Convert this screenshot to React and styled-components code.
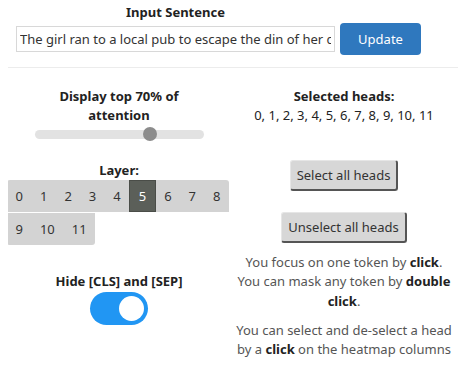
import React, { useState } from 'react'
import styled, { createGlobalStyle } from 'styled-components';

const GlobalStyle = createGlobalStyle`
  body {
    margin: 0 8px;
    padding-top: 3px;
    background: #fff;
    font-family: "Noto Sans", "DejaVu Sans", sans-serif;
    font-size: 13px;
    color: #222;
  }
`;

const layers = [0, 1, 2, 3, 4, 5, 6, 7, 8, 9, 10, 11]

const App = () => {
  const [sentence, setSentence] = useState('The girl ran to a local pub to escape the din of her city')
  const [layer, setLayer] = useState(5)
  const [hide, setHide] = useState(true)

  return (
    <Page>
      <GlobalStyle />
      <InputRow>
        <InputCol>
          <Title>Input Sentence</Title>
          <TextInput value={sentence} onChange={(e) => setSentence(e.target.value)} />
        </InputCol>
        <UpdateButton>Update</UpdateButton>
      </InputRow>
      <Rule />
      <Columns>
        <LeftCol>
          <Title>Display top 70% of<br />attention</Title>
          <Track>
            <Thumb />
          </Track>
          <LayerTitle>Layer:</LayerTitle>
          <LayerGroup>
            {layers.map((l) => (
              <LayerButton key={l} $active={l === layer} onClick={() => setLayer(l)}>{l}</LayerButton>
            ))}
          </LayerGroup>
          <HideTitle>Hide [CLS] and [SEP]</HideTitle>
          <Toggle $on={hide} onClick={() => setHide(!hide)}>
            <Knob $on={hide} />
          </Toggle>
        </LeftCol>
        <RightCol>
          <Title>Selected heads:</Title>
          <Heads>0, 1, 2, 3, 4, 5, 6, 7, 8, 9, 10, 11</Heads>
          <GrayButton $top="34px">Select all heads</GrayButton>
          <GrayButton $top="21px">Unselect all heads</GrayButton>
          <Help>
            You focus on one token by <b>click</b>.<br />
            You can mask any token by <b>double click</b>.
          </Help>
          <Help $top="9.5px">
            You can select and de-select a head by a <b>click</b> on the heatmap columns
          </Help>
        </RightCol>
      </Columns>
    </Page>
  )
}

export default App

const Page = styled.div`
  width: 450px;
`;
const InputRow = styled.div`
  display: flex;
  align-items: flex-end;
  gap: 5px;
  padding-left: 8px;
`;
const InputCol = styled.div`
  display: flex;
  flex-direction: column;
  align-items: center;
  width: 319px;
`;
const Title = styled.div`
  font-weight: 700;
  text-align: center;
  line-height: 19.5px;
  color: #222;
`;
const TextInput = styled.input`
  box-sizing: border-box;
  width: 319px;
  height: 26px;
  margin-top: 3px;
  margin-bottom: 3px;
  padding: 0 3px;
  border: 1px solid #d8d8d8;
  font-family: inherit;
  font-size: 13px;
  color: #333;
  outline: none;
`;
const UpdateButton = styled.button`
  width: 81px;
  height: 32px;
  border: none;
  border-radius: 4px;
  background: #2f78be;
  color: #fff;
  font-family: inherit;
  font-size: 13px;
`;
const Rule = styled.div`
  height: 1px;
  background: #ececec;
  margin: 12px 0 0 0;
`;
const Columns = styled.div`
  display: flex;
  padding-top: 19px;
`;
const LeftCol = styled.div`
  width: 222px;
  display: flex;
  flex-direction: column;
  align-items: center;
`;
const RightCol = styled.div`
  width: 228px;
  display: flex;
  flex-direction: column;
  align-items: center;
`;
const Track = styled.div`
  position: relative;
  width: 169px;
  height: 9px;
  border-radius: 5px;
  background: #e2e2e2;
  margin-top: 4px;
`;
const Thumb = styled.div`
  position: absolute;
  left: 108px;
  top: -3px;
  width: 14px;
  height: 14px;
  border-radius: 50%;
  background: #8c8c8c;
`;
const LayerTitle = styled(Title)`
  margin-top: 22px;
`;
const LayerGroup = styled.div`
  display: flex;
  flex-wrap: wrap;
  width: 223px;
  margin-left: -1px;
`;
const LayerButton = styled.div`
  height: 32px;
  padding: 0 8.5px;
  display: flex;
  align-items: center;
  justify-content: center;
  background: ${(props) => props.$active ? "#5b5f59" : "#d3d3d3"};
  color: ${(props) => props.$active ? "#fff" : "#333"};
  border: ${(props) => props.$active ? "1px solid #4a4d48" : "none"};
  box-sizing: border-box;
  cursor: pointer;
  &:first-child { border-top-left-radius: 3px; }
  &:nth-child(9) { border-top-right-radius: 3px; }
  &:nth-child(10) { border-bottom-left-radius: 3px; margin-top: 1px; }
  &:nth-child(11), &:nth-child(12) { margin-top: 1px; }
  &:last-child { border-bottom-right-radius: 3px; }
`;
const HideTitle = styled(Title)`
  margin-top: 27px;
`;
const Toggle = styled.div`
  position: relative;
  width: 58px;
  height: 33px;
  border-radius: 17px;
  margin-top: 0px;
  background: ${(props) => props.$on ? "#2196f3" : "#ccc"};
  cursor: pointer;
`;
const Knob = styled.div`
  position: absolute;
  top: 4px;
  left: ${(props) => props.$on ? "29px" : "4px"};
  width: 25px;
  height: 25px;
  border-radius: 50%;
  background: #fff;
`;
const Heads = styled.div`
  line-height: 19.5px;
  color: #222;
`;
const GrayButton = styled.button`
  margin-top: ${(props) => props.$top};
  height: 31px;
  padding: 0 6px;
  background: #d7d7d7;
  border: 1px solid #e6e6e6;
  border-right: 2px solid #555;
  border-bottom: 2px solid #555;
  border-radius: 3px;
  font-family: inherit;
  font-size: 13px;
  color: #333;
`;
const Help = styled.div`
  margin-top: ${(props) => props.$top || "10px"};
  width: 224px;
  text-align: center;
  line-height: 19.5px;
  color: #555;
  b { color: #222; }
`;
